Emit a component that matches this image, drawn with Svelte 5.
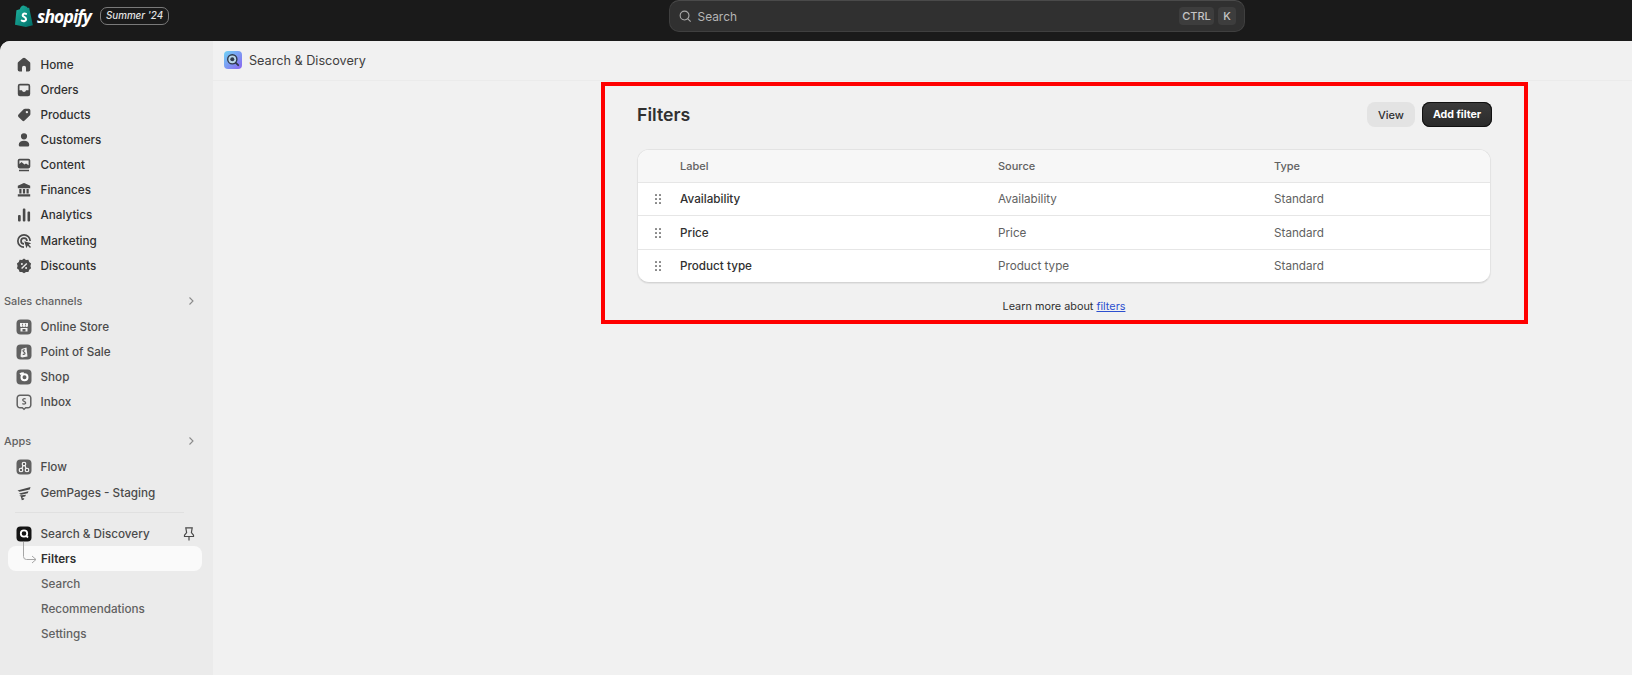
<script>
  const icons = {
    home: 'M8.700 3.300a2 2 0 0 1 2.600 0l4.400 3.800c.4.300.6.800.6 1.300v6.300a1.800 1.800 0 0 1-1.800 1.800H12v-3.700a2 2 0 0 0-4 0v3.700H5.500a1.800 1.800 0 0 1-1.800-1.800V8.400c0-.5.2-1 .6-1.300z',
    orders: 'M6 3.800h8A2.200 2.200 0 0 1 16.200 6v8a2.200 2.200 0 0 1-2.200 2.200H6A2.200 2.200 0 0 1 3.800 14V6A2.200 2.200 0 0 1 6 3.800zM5.500 5.500v4.700H8c.2 1.100 1 1.700 2 1.700s1.800-.6 2-1.700h2.500V5.500z',
    products: 'M11 3.700h3.700a1.700 1.700 0 0 1 1.700 1.700V9a2 2 0 0 1-.6 1.400l-5.200 5.200a1.700 1.700 0 0 1-2.400 0l-3.700-3.700a1.700 1.700 0 0 1 0-2.400l5.100-5.200A2 2 0 0 1 11 3.700zM12.900 5.900a1.200 1.200 0 1 0 0 2.400 1.200 1.200 0 0 0 0-2.400z',
    customers: 'M10 3.200a3.100 3.100 0 1 1 0 6.200 3.100 3.100 0 0 1 0-6.200zM4.800 14.300c0-2.100 2.100-3.600 5.200-3.600s5.200 1.500 5.200 3.600v.9a1.200 1.200 0 0 1-1.200 1.200H6a1.200 1.200 0 0 1-1.200-1.200z',
    content: 'M5.500 3.800h9a1.800 1.800 0 0 1 1.800 1.800v6a1.800 1.800 0 0 1-1.800 1.800h-9a1.800 1.800 0 0 1-1.800-1.800v-6a1.800 1.800 0 0 1 1.800-1.800zM5.400 5.500v3.400l2.100-1.800 3 2.400 1.500-1.100 2.600 1.800V5.500zM5 14.700h10v1.600H5z',
    finances: 'M9.300 3.200a1.700 1.700 0 0 1 1.400 0l5.500 2.500V8.200H3.800V5.700zM5.300 9h2.200v4.400H5.300zM8.900 9h2.200v4.400H8.900zM12.500 9h2.200v4.400h-2.200zM3.800 14.300h12.400v2.200H3.800z',
    analytics: 'M8.800 4.500a1 1 0 0 1 1-1h.600a1 1 0 0 1 1 1v11a1 1 0 0 1-1 1h-.600a1 1 0 0 1-1-1zM4 11a1 1 0 0 1 1-1h.700a1 1 0 0 1 1 1v4.500a1 1 0 0 1-1 1H5a1 1 0 0 1-1-1zM13.500 7.500a1 1 0 0 1 1-1h.600a1 1 0 0 1 1 1v8a1 1 0 0 1-1 1h-.600a1 1 0 0 1-1-1z',
    marketing: 'M10 3a7 7 0 0 1 7 7h-1.700A5.300 5.300 0 1 0 10 15.300V17a7 7 0 0 1 0-14zM10 6.200a3.800 3.800 0 0 1 3.800 3.800h-1.700a2.100 2.100 0 1 0-2.100 2.100v1.700a3.800 3.800 0 0 1 0-7.600zM10.300 10.300l7 2-2.600 1.300 2.300 2.300-1 1-2.300-2.300-1.300 2.600z',
    discounts: 'M10 2.500l2 1.400 2.400-.1.800 2.300 1.900 1.400-.7 2.400.7 2.400-1.900 1.400-.8 2.300-2.400-.1-2 1.400-2-1.400-2.400.1-.8-2.300-1.900-1.400.7-2.400-.7-2.400 1.900-1.400.8-2.300 2.400.1zM7.900 7a1 1 0 1 0 0 2 1 1 0 0 0 0-2zM12.100 11a1 1 0 1 0 0 2 1 1 0 0 0 0-2zM12.300 6.900l-5.200 5.200 1 1 5.200-5.200z'
  };
  const main = [
    ['Home', 'home'], ['Orders', 'orders'], ['Products', 'products'], ['Customers', 'customers'],
    ['Content', 'content'], ['Finances', 'finances'], ['Analytics', 'analytics'], ['Marketing', 'marketing'], ['Discounts', 'discounts']
  ];
  const rows = [
    ['Availability', 'Availability', 'Standard'],
    ['Price', 'Price', 'Standard'],
    ['Product type', 'Product type', 'Standard']
  ];
  const subs = ['Search', 'Recommendations', 'Settings'];
  const dots = [[8, 6], [12, 6], [8, 10], [12, 10], [8, 14], [12, 14]];
</script>

<div class="page">
  <header class="topbar">
    <div class="brand">
      <svg class="bag" viewBox="0 0 20 23" aria-hidden="true">
        <defs>
          <linearGradient id="bagfill" x1="0" y1="0" x2="1" y2="1">
            <stop offset="0" stop-color="#1fb5a0" />
            <stop offset="1" stop-color="#006d68" />
          </linearGradient>
        </defs>
        <path fill="url(#bagfill)" d="M1.500 5.500 5 4.400C5.700 2 7.300.4 9 .4c.7 0 1.200.3 1.600.8 1.200-.2 2.200.6 2.700 1.800l1.300-.3.300.2L18.800 21.300 11.500 23 0 20.800z" />
        <path fill="none" stroke="#fff" stroke-width="2.200" stroke-linecap="round" d="M11.600 9.300c-1.700-.8-3.500-.2-3.500 1.300 0 1.900 3.500 2 3.500 4.200 0 2-2.400 2.600-4.500 1.500" />
      </svg>
      <span class="wordmark">shopify</span>
      <span class="season">Summer '24</span>
    </div>
    <div class="search">
      <svg class="search-icon" viewBox="0 0 16 16" aria-hidden="true">
        <circle cx="7" cy="7" r="4.700" /><path d="m10.500 10.500 3 3" />
      </svg>
      <span class="search-label">Search</span>
      <kbd class="ctrl">CTRL</kbd>
      <kbd class="k">K</kbd>
    </div>
  </header>

  <div class="body">
    <nav class="sidebar">
      {#each main as [label, icon]}
        <div class="row">
          <svg class="ico" viewBox="0 0 20 20" aria-hidden="true"><path fill-rule="evenodd" d={icons[icon]} /></svg>
          <span>{label}</span>
        </div>
      {/each}

      <div class="heading first"><span>Sales channels</span><svg class="chev" viewBox="0 0 10 10" aria-hidden="true"><path d="m3.500 1.500 3.500 3.500-3.500 3.500" /></svg></div>
      <div class="row soft">
        <svg class="ico" viewBox="0 0 20 20" aria-hidden="true">
          <rect x="2.500" y="2.500" width="15" height="15" rx="4" class="tile" />
          <path class="glyph" d="M6 6h8v2.700a1.300 1.300 0 0 1-2.700 0 1.300 1.300 0 0 1-2.600 0 1.300 1.300 0 0 1-2.700 0zM6.500 11h7v3.500h-7z" />
          <path class="tile-fill" d="M8.500 12h3v2.500h-3zM8 6.800h.8v1.800H8zM11.200 6.800h.8v1.800h-.8z" />
        </svg>
        <span>Online Store</span>
      </div>
      <div class="row soft">
        <svg class="ico" viewBox="0 0 20 20" aria-hidden="true">
          <rect x="2.500" y="2.500" width="15" height="15" rx="4" class="tile" />
          <path class="glyph" d="M7.500 7 12.500 5.500l1 9-5.500 1-1.500-1z" />
          <path class="stroke-dark" d="M11 8c-1.200-.4-2 .1-2 .8 0 1.100 2 1.200 2 2.500 0 .9-1.100 1.300-2.200.8" />
        </svg>
        <span>Point of Sale</span>
      </div>
      <div class="row soft">
        <svg class="ico" viewBox="0 0 20 20" aria-hidden="true">
          <rect x="2.500" y="2.500" width="15" height="15" rx="4" class="tile" />
          <circle cx="10.500" cy="10.300" r="3" class="stroke-light" />
          <path class="stroke-light" d="M6 7.200c1-.7 2.300-.9 3.800-.9" />
        </svg>
        <span>Shop</span>
      </div>
      <div class="row soft">
        <svg class="ico" viewBox="0 0 20 20" aria-hidden="true">
          <path class="outline" d="M6 3.200h8A2.800 2.800 0 0 1 16.800 6v7a2.800 2.800 0 0 1-2.800 2.800h-2.300L10 17.300l-1.700-1.500H6A2.800 2.800 0 0 1 3.200 13V6A2.800 2.800 0 0 1 6 3.200z" />
          <path class="outline thin" d="M11.700 7c-1.500-.7-3-.1-3 .9 0 1.500 3 1.400 3 3 0 1.100-1.700 1.500-3.400.8" />
        </svg>
        <span>Inbox</span>
      </div>

      <div class="heading second"><span>Apps</span><svg class="chev" viewBox="0 0 10 10" aria-hidden="true"><path d="m3.500 1.500 3.500 3.500-3.500 3.500" /></svg></div>
      <div class="row soft">
        <svg class="ico" viewBox="0 0 20 20" aria-hidden="true">
          <rect x="2.500" y="2.500" width="15" height="15" rx="4" class="tile" />
          <circle cx="10" cy="7" r="1.800" class="stroke-light thin" />
          <circle cx="7" cy="13" r="1.800" class="stroke-light thin" />
          <circle cx="13" cy="13" r="1.800" class="stroke-light thin" />
          <path class="stroke-light thin" d="M9.200 8.600 7.800 11.400M10.800 8.600l1.400 2.800" />
        </svg>
        <span>Flow</span>
      </div>
      <div class="row soft">
        <svg class="ico" viewBox="0 0 20 20" aria-hidden="true">
          <path fill-rule="evenodd" d="M16.500 4 15.800 6.500 5.500 8.800 3.500 7.500zM14.500 8.200l-.8 2-6.700 1.500-2-1.200zM12 11.700l-.8 1.700-2.700.6.300 1.500 1.400-.4-.2 1.500-2.200.6-1-3.600-1.500-1z" />
        </svg>
        <span>GemPages - Staging</span>
      </div>

      <div class="divider"></div>

      <div class="row soft app">
        <svg class="ico" viewBox="0 0 20 20" aria-hidden="true">
          <rect x="2.500" y="2.500" width="15" height="15" rx="4" fill="#141414" />
          <circle cx="10" cy="9.500" r="3.200" class="stroke-light wide" />
          <path class="stroke-light wide" d="m12.300 11.800 1.700 1.700" />
        </svg>
        <span class="grow">Search &amp; Discovery</span>
        <svg class="pin" viewBox="0 0 16 16" aria-hidden="true">
          <path d="M4.800 1.800h6.400l-.8 4.700 2.100 2.700v1.300H3.500V9.200l2.100-2.700zM8 10.500v4" />
        </svg>
      </div>
      <div class="row active">
        <svg class="elbow" viewBox="0 0 24 32" aria-hidden="true"><path d="M6.500 0v14.500a3 3 0 0 0 3 3h9.500M15 14l4 3.500-4 3.500" /></svg>
        <span>Filters</span>
      </div>
      {#each subs as label}
        <div class="row sub"><span>{label}</span></div>
      {/each}
    </nav>

    <main class="main">
      <div class="apphead">
        <svg class="applogo" viewBox="0 0 18 18" aria-hidden="true">
          <defs>
            <linearGradient id="appfill" x1="0" y1="0" x2="1" y2="1">
              <stop offset="0" stop-color="#6fd3f5" />
              <stop offset="1" stop-color="#8a63f0" />
            </linearGradient>
          </defs>
          <rect width="18" height="18" rx="4" fill="url(#appfill)" />
          <circle cx="8.300" cy="8.300" r="4.600" fill="#b9d6e8" stroke="#303a4c" stroke-width="1.400" />
          <circle cx="8.300" cy="8.300" r="2" fill="#303a4c" />
          <path d="m11.800 11.800 2.400 2.400" stroke="#303a4c" stroke-width="1.800" stroke-linecap="round" />
        </svg>
        <span>Search &amp; Discovery</span>
      </div>

      <section class="panel">
        <div class="panel-head">
          <h1>Filters</h1>
          <div class="actions">
            <button class="btn view">View</button>
            <button class="btn add">Add filter</button>
          </div>
        </div>

        <div class="table">
          <div class="tr th">
            <span></span><span>Label</span><span>Source</span><span>Type</span>
          </div>
          {#each rows as [label, source, type]}
            <div class="tr">
              <svg class="drag" viewBox="0 0 20 20" aria-hidden="true">
                {#each dots as [x, y]}<rect x={x - 1} y={y - 1} width="2" height="2" rx=".5" />{/each}
              </svg>
              <strong>{label}</strong>
              <span>{source}</span>
              <span>{type}</span>
            </div>
          {/each}
        </div>

        <p class="learn">Learn more about <a href="#filters">filters</a></p>
      </section>
    </main>
  </div>
</div>

<style>
  :global(body) {
    margin: 0;
    background: #1a1a1a;
  }
  .page {
    width: 1632px;
    height: 675px;
    overflow: hidden;
    display: flex;
    flex-direction: column;
    font-family: Inter, "Liberation Sans", sans-serif;
    font-size: 11.700px;
    color: #303030;
  }
  .topbar {
    height: 41px;
    flex: none;
    background: #1a1a1a;
    display: grid;
    grid-template-columns: 669px 576px;
    align-items: start;
  }
  .brand {
    display: flex;
    align-items: center;
    height: 32px;
    padding-left: 14.500px;
  }
  .bag {
    width: 19px;
    height: 22px;
  }
  .wordmark {
    margin-left: 3.500px;
    width: 63px;
    font-family: "Open Sans", sans-serif;
    font-weight: 700;
    font-style: italic;
    font-size: 17.500px;
    letter-spacing: -0.900px;
    color: #fff;
  }
  .season {
    height: 15.500px;
    line-height: 15.500px;
    padding: 0 5px;
    border: 1px solid #7a7a7a;
    border-radius: 7px;
    font-size: 9.800px;
    font-style: italic;
    font-weight: 500;
    color: #e3e3e3;
  }
  .search {
    height: 32px;
    box-sizing: border-box;
    background: #303030;
    border: 1px solid #3f3f3f;
    border-top-color: #4a4a4a;
    border-radius: 10px;
    display: flex;
    align-items: center;
    padding-left: 8px;
    font-size: 11.900px;
    color: #b5b5b5;
  }
  .search-icon {
    width: 15px;
    height: 15px;
    fill: none;
    stroke: #a8a8a8;
    stroke-width: 1.200;
  }
  .search-label {
    margin-left: 4.500px;
    flex: 1;
  }
  kbd {
    font-family: inherit;
    font-size: 11px;
    font-weight: 500;
    height: 18px;
    line-height: 18px;
    background: #3d3d3d;
    border-radius: 4px;
    text-align: center;
    color: #c4c4c4;
  }
  .ctrl {
    width: 35px;
  }
  .k {
    width: 18px;
    margin: 0 8px 0 4px;
  }
  .body {
    flex: 1;
    display: flex;
    min-height: 0;
    background: #f1f1f1;
    border-top-left-radius: 10px;
    overflow: hidden;
  }
  .sidebar {
    width: 213px;
    flex: none;
    box-sizing: border-box;
    padding-top: 11px;
    background: #ebebeb;
    display: flex;
    flex-direction: column;
    font-weight: 450;
  }
  .row {
    height: 25.150px;
    flex: none;
    display: flex;
    align-items: center;
    gap: 6.500px;
    padding-left: 14px;
  }
  .row.soft {
    color: #4a4a4a;
  }
  .ico {
    width: 20px;
    height: 20px;
    flex: none;
    fill: #4a4a4a;
  }
  .tile {
    fill: #616161;
  }
  .tile-fill {
    fill: #616161;
  }
  .glyph {
    fill: #f1f1f1;
  }
  .stroke-dark {
    fill: none;
    stroke: #616161;
    stroke-width: 1.200;
  }
  .stroke-light {
    fill: none;
    stroke: #fff;
    stroke-width: 2;
  }
  .stroke-light.thin {
    stroke-width: 1.100;
  }
  .stroke-light.wide {
    stroke-width: 1.800;
  }
  .outline {
    fill: none;
    stroke: #616161;
    stroke-width: 1.500;
  }
  .outline.thin {
    stroke-width: 1.300;
  }
  .heading {
    height: 26px;
    flex: none;
    display: flex;
    align-items: center;
    justify-content: space-between;
    padding: 0 17px 0 4px;
    font-size: 10.900px;
    font-weight: 500;
    color: #616161;
  }
  .heading.first {
    margin-top: 10px;
  }
  .heading.second {
    height: 27.500px;
    margin-top: 12.500px;
  }
  .chev {
    width: 10px;
    height: 10px;
    fill: none;
    stroke: #8a8a8a;
    stroke-width: 1.100;
  }
  .divider {
    margin: 7px 29px 8px 15px;
    height: 1px;
    flex: none;
    background: #e0e0e0;
  }
  .grow {
    flex: 1;
  }
  .pin {
    width: 16px;
    height: 16px;
    margin-right: 16px;
    fill: none;
    stroke: #4a4a4a;
    stroke-width: 1.200;
  }
  .active {
    position: relative;
    margin: 0 11px 0 8px;
    padding-left: 33px;
    background: #fafafa;
    border-radius: 8px;
    font-weight: 600;
  }
  .elbow {
    position: absolute;
    left: 9px;
    top: -4px;
    width: 24px;
    height: 32px;
    fill: none;
    stroke: #a6a6a6;
    stroke-width: 1;
  }
  .sub {
    padding-left: 41px;
    color: #616161;
  }
  .main {
    flex: 1;
    min-width: 0;
  }
  .apphead {
    height: 40px;
    box-sizing: border-box;
    padding: 0 0 1px 11px;
    border-bottom: 1px solid #ebebeb;
    display: flex;
    align-items: center;
    gap: 7px;
    font-size: 12.650px;
    color: #3f3f3f;
  }
  .applogo {
    width: 18px;
    height: 18px;
  }
  .panel {
    width: 927px;
    height: 242px;
    box-sizing: border-box;
    margin: 1px 0 0 388px;
    border: 4px solid #f00;
    padding: 16px 33px 0 32px;
  }
  .panel-head {
    display: flex;
    align-items: center;
    justify-content: space-between;
    height: 25px;
    margin-right: -1px;
  }
  h1 {
    margin: 0;
    font-size: 17.700px;
    font-weight: 600;
    color: #303030;
  }
  .actions {
    display: flex;
    gap: 7px;
  }
  .btn {
    height: 25px;
    padding: 0;
    border: 0;
    font-family: inherit;
    font-size: 11px;
    border-radius: 8px;
  }
  .view {
    width: 48px;
    background: #e3e3e3;
    color: #303030;
    font-weight: 500;
  }
  .add {
    width: 70px;
    background: linear-gradient(#3b3b3b, #2a2a2a);
    color: #fff;
    font-weight: 650;
    font-size: 10.600px;
    box-shadow: 0 0 0 1px #111 inset;
  }
  .table {
    margin-top: 22px;
    background: #fff;
    border: 1px solid #e3e3e3;
    border-bottom-color: #d4d4d4;
    border-radius: 12px;
    overflow: hidden;
    box-shadow: 0 1px 1px rgba(0, 0, 0, .06);
  }
  .tr {
    display: grid;
    grid-template-columns: 42px 318px 276px 1fr;
    align-items: center;
    height: 33.400px;
    border-top: 1px solid #e6e6e6;
    box-sizing: border-box;
    color: #616161;
  }
  .th {
    height: 32px;
    border-top: 0;
    background: #f7f7f7;
    font-size: 11px;
    font-weight: 450;
  }
  .drag {
    width: 20px;
    height: 20px;
    margin-left: 10px;
    fill: #8a8a8a;
  }
  strong {
    font-weight: 550;
    color: #303030;
  }
  .learn {
    margin: 16px 0 0;
    text-align: center;
    font-size: 10.850px;
    color: #303030;
  }
  a {
    color: #2c4fcf;
  }
</style>
